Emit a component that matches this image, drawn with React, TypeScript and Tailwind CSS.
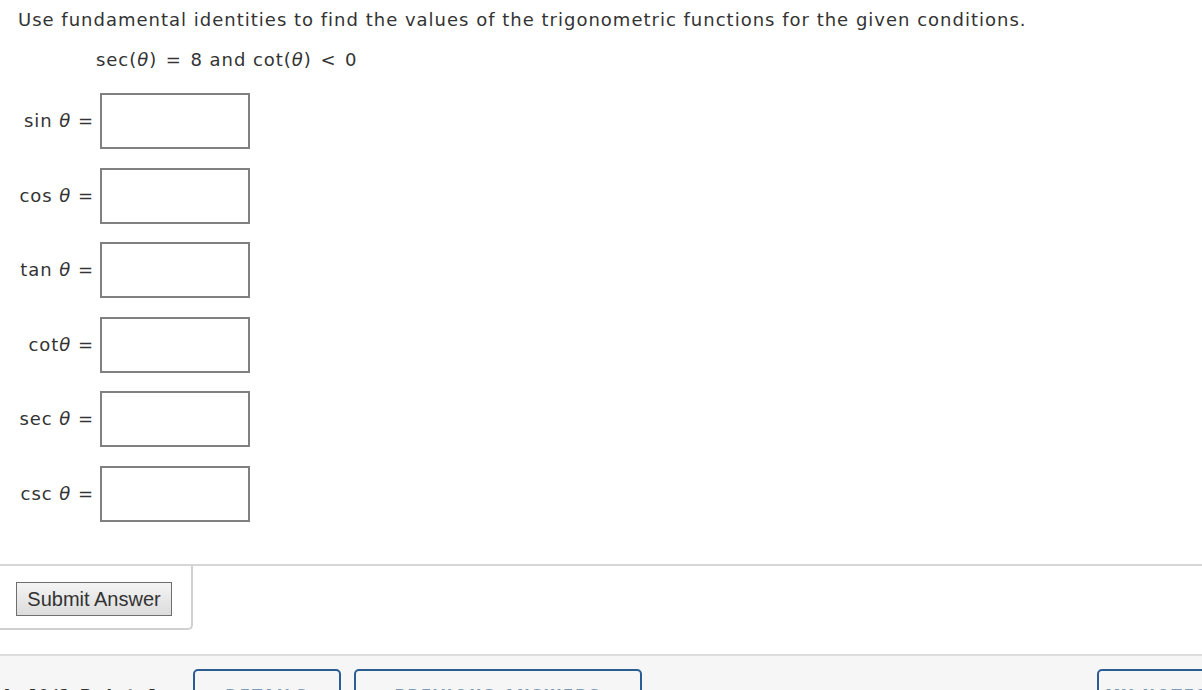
import React from "react";

const rows: [string, boolean][] = [
  ["sin", true],
  ["cos", true],
  ["tan", true],
  ["cot", false],
  ["sec", true],
  ["csc", true],
];

export default function App() {
  return (
    <div
      className="relative h-[690px] w-full overflow-hidden bg-white text-[#333333]"
      style={{ fontFamily: '"DejaVu Sans", Verdana, sans-serif' }}
    >
      <p className="whitespace-nowrap pl-[18px] pt-[8px] text-[18px] leading-[24px] tracking-[1px]">
        Use fundamental identities to find the values of the trigonometric functions for the given conditions.
      </p>
      <p className="whitespace-nowrap pl-[96px] pt-[16px] text-[18px] leading-[24px] tracking-[0.95px]">
        sec(<i>θ</i>) <span className="px-[2px]">=</span> 8 and cot(<i>θ</i>) <span className="px-[2px]">&lt;</span> 0
      </p>
      <div className="mt-[21px] flex flex-col gap-[18.6px]">
        {rows.map(([fn, space]) => (
          <div key={fn} className="flex items-center">
            <div className="w-[100px] whitespace-nowrap pr-[6px] text-right text-[18px] leading-[24px] tracking-[0.95px]">
              {fn}
              {space ? " " : ""}
              <i>θ</i> <span>=</span>
            </div>
            <div className="h-[56px] w-[150px] border-2 border-[#808080] bg-white" />
          </div>
        ))}
      </div>
      <div className="mt-[42px] border-t-2 border-[#d6d6d6]">
        <div className="w-[193px] rounded-br-[5px] border-r-2 border-b-2 border-[#d0d0d0] pl-[16px] pt-[16px] pb-[12px]">
          <button
            className="h-[34px] w-[156px] border border-[#6e6e6e] bg-gradient-to-b from-[#f4f4f4] to-[#dcdcdc] text-[20px] leading-[24px] text-[#333333]"
            style={{ fontFamily: '"Liberation Sans", Arial, sans-serif' }}
          >
            Submit Answer
          </button>
        </div>
      </div>
      <div className="mt-[24px] h-[60px] border-t-2 border-[#dddddd] bg-[#f6f6f6]">
        <div className="flex items-start pt-[13px]">
          <div className="w-[193px] whitespace-nowrap pt-[18px] text-[16px] font-bold leading-[18px] tracking-[2px] text-[#333333]">
            4. [0/1 Points]
          </div>
          <div className="h-[40px] w-[148px] rounded-[5px] border-2 border-[#2a5e92] pt-[16px] text-center text-[15px] font-bold leading-[18px] tracking-[2px] text-[#7a9cc0]">
            DETAILS
          </div>
          <div className="ml-[13px] h-[40px] w-[288px] rounded-[5px] border-2 border-[#2a5e92] pt-[16px] text-center text-[15px] font-bold leading-[18px] tracking-[2px] text-[#7a9cc0]">
            PREVIOUS ANSWERS
          </div>
          <div className="ml-auto -mr-[15px] h-[40px] w-[120px] rounded-[5px] border-2 border-[#2a5e92] pt-[16px] text-center text-[15px] font-bold leading-[18px] tracking-[2px] text-[#7a9cc0]">
            MY NOTES
          </div>
        </div>
      </div>
    </div>
  );
}
